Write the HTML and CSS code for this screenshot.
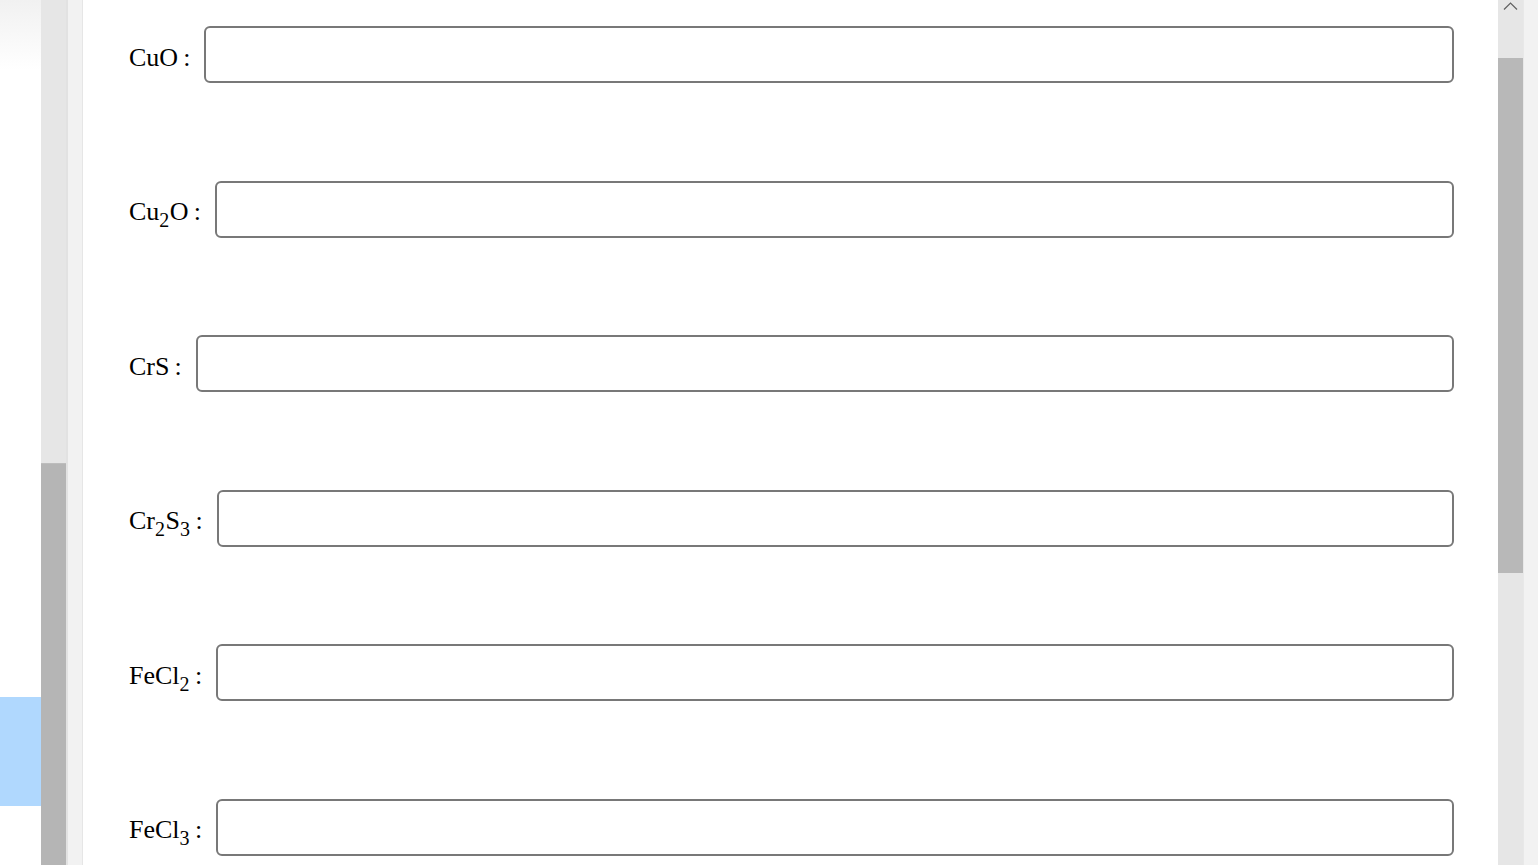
FILE: index.html
```html
<!DOCTYPE html>
<html>
<head>
<meta charset="utf-8">
<link rel="stylesheet" href="styles.css">
</head>
<body>
<div class="frame">
  <div class="side">
    <div class="side-fade"></div>
    <div class="side-sel"></div>
  </div>
  <div class="side-scroll"><div class="side-thumb"></div></div>
  <div class="gutter"></div>
  <main class="main">
    <div class="row"><label class="lbl">CuO<span class="colon">:</span></label><input class="field" type="text"></div>
    <div class="row"><label class="lbl">Cu<sub>2</sub>O<span class="colon">:</span></label><input class="field" type="text"></div>
    <div class="row"><label class="lbl">CrS<span class="colon">:</span></label><input class="field" type="text"></div>
    <div class="row"><label class="lbl">Cr<sub>2</sub>S<sub>3</sub><span class="colon">:</span></label><input class="field" type="text"></div>
    <div class="row"><label class="lbl">FeCl<sub>2</sub><span class="colon">:</span></label><input class="field" type="text"></div>
    <div class="row"><label class="lbl">FeCl<sub>3</sub><span class="colon">:</span></label><input class="field" type="text"></div>
  </main>
  <div class="vscroll">
    <div class="arrow-up"><svg width="15" height="10" viewBox="0 0 15 10"><path d="M1 8.5 L7.5 2 L14 8.5" fill="none" stroke="#606060" stroke-width="1.2"/></svg></div>
    <div class="vthumb"></div>
  </div>
  <div class="edge"></div>
</div>
</body>
</html>
```
FILE: styles.css
```css
html, body {
  margin: 0;
  padding: 0;
  height: 100%;
  overflow: hidden;
  background: #ffffff;
}
.frame {
  display: flex;
  height: 865px;
  width: 1538px;
}
.side {
  width: 41px;
  flex: none;
  display: flex;
  flex-direction: column;
  background: #ffffff;
}
.side-fade {
  height: 70px;
  background: linear-gradient(to bottom, #f1f1f1, #ffffff);
}
.side-sel {
  margin-top: 627px;
  height: 109px;
  background: #b0d8fe;
}
.side-scroll {
  width: 25px;
  flex: none;
  background: #e6e6e6;
  display: flex;
  flex-direction: column;
  justify-content: flex-end;
}
.side-thumb {
  height: 401px;
  background: #b5b5b5;
  border-top: 1px solid #bdbdbd;
}
.gutter {
  width: 14px;
  flex: none;
  background: #f2f2f2;
  border-left: 2px solid #e2e2e2;
  border-right: 1px solid #e6e6e6;
}
.main {
  flex: 1;
  display: flex;
  flex-direction: column;
  gap: 97.6px;
  padding: 26px 44px 0 46px;
  font-family: "Liberation Serif", "Times New Roman", serif;
  font-size: 26px;
  color: #000;
  overflow: hidden;
}
.row {
  display: flex;
  align-items: center;
  height: 57px;
  flex: none;
}
.lbl {
  white-space: nowrap;
  padding-top: 6px;
}
.lbl sub {
  font-size: 20px;
  vertical-align: -7px;
  line-height: 0;
  margin-right: 0.5px;
}
.colon {
  margin-left: 5px;
}
.field {
  flex: 1;
  height: 57px;
  box-sizing: border-box;
  margin: 0 0 0 14px;
  border: 2px solid #787878;
  border-radius: 6px;
  background: #fff;
  outline: none;
  padding: 0 10px;
  font: inherit;
}
.vscroll {
  width: 25px;
  flex: none;
  background: #e6e6e6;
  display: flex;
  flex-direction: column;
}
.arrow-up {
  height: 58px;
  display: flex;
  justify-content: center;
  align-items: flex-start;
}
.arrow-up svg {
  display: block;
  margin-top: 1px;
}
.vthumb {
  height: 515px;
  background: #b8b8b8;
}
.edge {
  width: 14px;
  flex: none;
  background: #f2f2f2;
  border-left: 1px solid #e8e8e8;
}
```
